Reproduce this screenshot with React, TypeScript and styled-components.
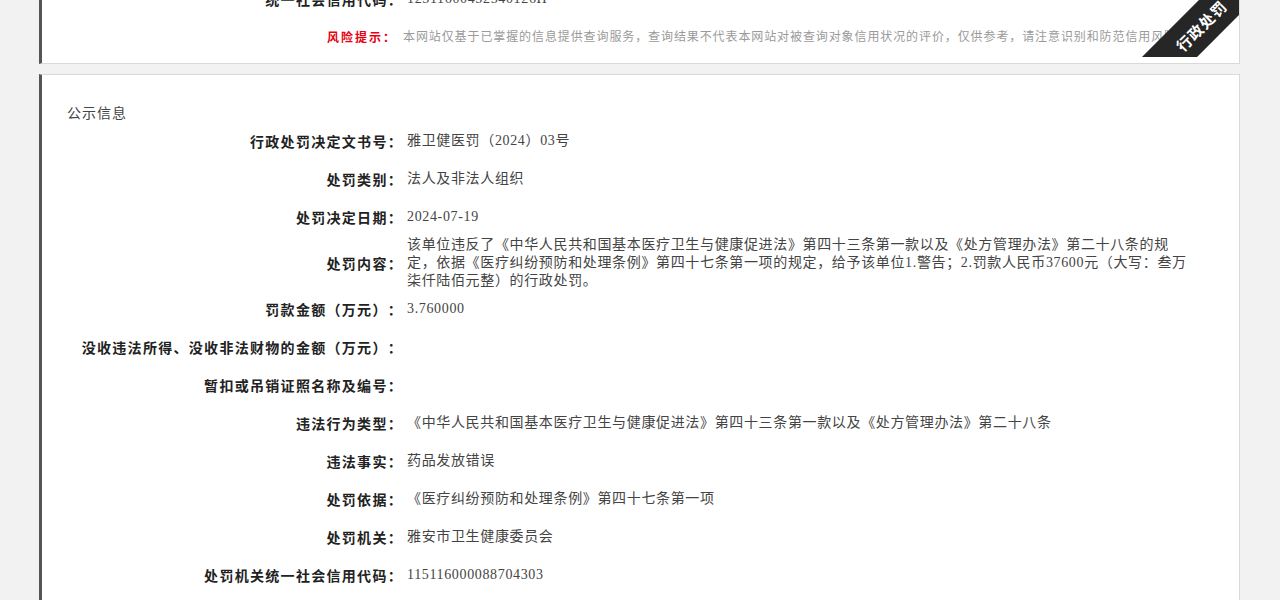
import * as React from "react";
import styled, { createGlobalStyle } from "styled-components";

const GlobalStyle = createGlobalStyle`
  html, body {
    margin: 0;
    padding: 0;
    background: #f2f2f2;
    font-family: "Liberation Serif", "Noto Sans CJK SC", serif;
    text-spacing-trim: space-all;
  }
`;

const Page = styled.div`
  padding-bottom: 40px;
  overflow: hidden;
`;

const Card = styled.section<{ $first?: boolean }>`
  position: relative;
  overflow: hidden;
  box-sizing: border-box;
  width: 1201px;
  margin: ${(p) => (p.$first ? "-40px 0 10px 39px" : "0 0 0 39px")};
  padding: ${(p) => (p.$first ? "19px 0 7px" : "27px 0 20px")};
  background: #fff;
  border: 1px solid #d9d9d9;
  border-left: 3px solid #555;
`;

const Heading = styled.div`
  padding-left: 25px;
  font-family: "Noto Sans CJK SC", sans-serif;
  font-size: 14px;
  line-height: 20px;
  letter-spacing: 1px;
  color: #444;
`;

const Row = styled.div`
  display: flex;
  align-items: center;
  min-height: 38px;
`;

const Label = styled.div<{ $risk?: boolean }>`
  flex-shrink: 0;
  box-sizing: border-box;
  width: 361px;
  padding-right: ${(p) => (p.$risk ? "6px" : "0")};
  text-align: right;
  font-family: "Noto Sans CJK SC", sans-serif;
  font-weight: 700;
  font-size: ${(p) => (p.$risk ? "12px" : "14px")};
  letter-spacing: ${(p) => (p.$risk ? "2px" : "1.3px")};
  line-height: 18px;
  color: ${(p) => (p.$risk ? "#e60012" : "#222")};
`;

const Value = styled.div<{ $risk?: boolean }>`
  margin-left: ${(p) => (p.$risk ? "0" : "4px")};
  width: ${(p) => (p.$risk ? "auto" : "786px")};
  white-space: ${(p) => (p.$risk ? "nowrap" : "normal")};
  font-size: ${(p) => (p.$risk ? "12px" : "14px")};
  letter-spacing: ${(p) => (p.$risk ? "0.9px" : "0.65px")};
  line-height: 18px;
  color: ${(p) => (p.$risk ? "#9a9a9a" : "#444")};
`;

const Ribbon = styled.div`
  position: absolute;
  right: 0;
  bottom: 6px;
  width: 100px;
  height: 100px;
  overflow: hidden;
  pointer-events: none;
`;

const RibbonBand = styled.div`
  position: absolute;
  left: -18px;
  top: 48.5px;
  width: 160px;
  height: 39px;
  display: flex;
  align-items: center;
  justify-content: center;
  transform: rotate(-45deg);
  background: #262626;
`;

const RibbonText = styled.span`
  color: #fff;
  font-family: "Noto Sans CJK SC", sans-serif;
  font-size: 15px;
  line-height: 16px;
  font-weight: 700;
  letter-spacing: 1px;
`;

const records: [string, string][] = [
  ["行政处罚决定文书号：", "雅卫健医罚（2024）03号"],
  ["处罚类别：", "法人及非法人组织"],
  ["处罚决定日期：", "2024-07-19"],
  [
    "处罚内容：",
    "该单位违反了《中华人民共和国基本医疗卫生与健康促进法》第四十三条第一款以及《处方管理办法》第二十八条的规定，依据《医疗纠纷预防和处理条例》第四十七条第一项的规定，给予该单位1.警告；2.罚款人民币37600元（大写：叁万柒仟陆佰元整）的行政处罚。",
  ],
  ["罚款金额（万元）：", "3.760000"],
  ["没收违法所得、没收非法财物的金额（万元）：", ""],
  ["暂扣或吊销证照名称及编号：", ""],
  ["违法行为类型：", "《中华人民共和国基本医疗卫生与健康促进法》第四十三条第一款以及《处方管理办法》第二十八条"],
  ["违法事实：", "药品发放错误"],
  ["处罚依据：", "《医疗纠纷预防和处理条例》第四十七条第一项"],
  ["处罚机关：", "雅安市卫生健康委员会"],
  ["处罚机关统一社会信用代码：", "115116000088704303"],
];

export default function App() {
  return (
    <Page>
      <GlobalStyle />
      <Card $first>
        <Row>
          <Label>统一社会信用代码：</Label>
          <Value>12511600452540126H</Value>
        </Row>
        <Row>
          <Label $risk>风险提示：</Label>
          <Value $risk>
            本网站仅基于已掌握的信息提供查询服务，查询结果不代表本网站对被查询对象信用状况的评价，仅供参考，请注意识别和防范信用风险。
          </Value>
        </Row>
        <Ribbon>
          <RibbonBand>
            <RibbonText>行政处罚</RibbonText>
          </RibbonBand>
        </Ribbon>
      </Card>
      <Card>
        <Heading>公示信息</Heading>
        {records.map(([label, value], index) => (
          <Row key={index}>
            <Label>{label}</Label>
            <Value>{value}</Value>
          </Row>
        ))}
      </Card>
    </Page>
  );
}
